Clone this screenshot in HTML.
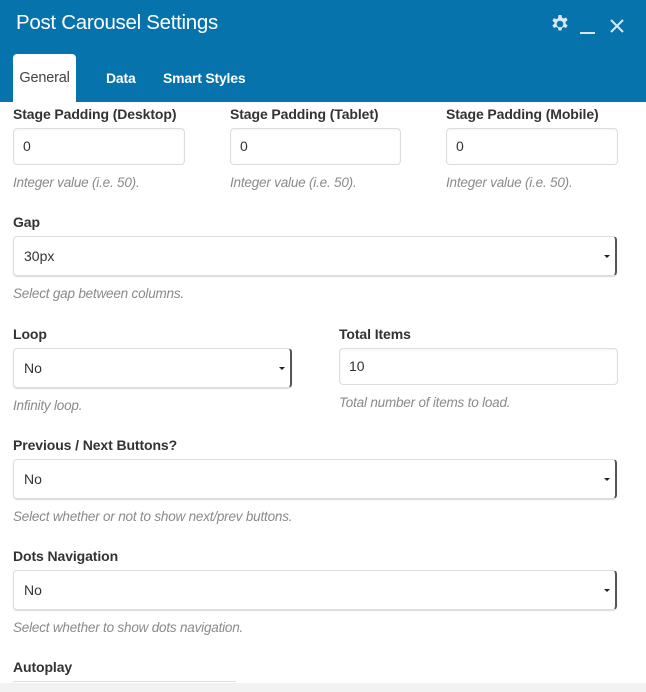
<!DOCTYPE html>
<html><head><style>
*{box-sizing:border-box;margin:0;padding:0}
html,body{width:646px;height:692px;overflow:hidden}
body{background:#fff;font-family:"Liberation Sans",sans-serif;position:relative}
.hdr{position:absolute;left:0;top:0;width:646px;height:102px;background:#0773ad}
.title{position:absolute;left:16px;top:11px;color:#fff;font-size:20.5px;letter-spacing:-0.3px}
.tab{position:absolute;top:54px;height:48px;font-size:14px;line-height:48px;color:#fff;font-weight:bold;letter-spacing:-0.2px}
.tab.act{background:#fff;color:#444;font-weight:normal;border-radius:4px 4px 0 0;left:13px;width:63px;text-align:center;font-size:14.5px}
.a{position:absolute}
.lbl{font-size:14px;font-weight:bold;color:#333;letter-spacing:-0.1px}
.help{font-size:13.5px;font-style:italic;color:#8a8a8a;letter-spacing:-0.2px}
.in{border:1px solid #ddd;border-radius:4px;height:37px;font-size:14px;color:#333;padding-left:9px;line-height:35px;box-shadow:inset 0 1px 2px rgba(0,0,0,.05)}
.sel{border:1px solid #ddd;border-right:2px solid #555;border-radius:4px;height:40px;font-size:14px;color:#333;padding-left:10px;line-height:38px;box-shadow:0 1px 1px rgba(0,0,0,.15)}
.sel:after{content:"";position:absolute;right:5px;top:18px;border:3px solid transparent;border-top:3px solid #222;border-bottom:0}
.foot{position:absolute;left:0;top:683px;width:646px;height:9px;background:#f2f2f2}
</style></head><body>
<div class="hdr">
<div class="title">Post Carousel Settings</div>
<svg class="a" style="left:550px;top:14px" width="20" height="20" viewBox="0 0 20 20"><path fill="#d7e9f5" d="M8.5 1h3l.5 2.6 1.6.9 2.5-1 1.5 2.6-2 1.7v1.9l2 1.7-1.5 2.6-2.5-1-1.6.9-.5 2.6h-3l-.5-2.6-1.6-.9-2.5 1-1.5-2.6 2-1.7V8.4l-2-1.7 1.5-2.6 2.5 1 1.6-.9z"/><circle cx="10" cy="10" r="3.3" fill="#0773ad"/></svg>
<div class="a" style="left:580px;top:32px;width:15px;height:2px;background:#d7e9f5"></div>
<svg class="a" style="left:609px;top:18px" width="16" height="16" viewBox="0 0 16 16"><path d="M2 2L14 14M14 2L2 14" stroke="#d7e9f5" stroke-width="2"/></svg>
<div class="tab act">General</div>
<div class="tab" style="left:106px">Data</div>
<div class="tab" style="left:163px">Smart Styles</div>
</div>

<div class="a lbl" style="left:13px;top:106px">Stage Padding (Desktop)</div>
<div class="a lbl" style="left:230px;top:106px">Stage Padding (Tablet)</div>
<div class="a lbl" style="left:446px;top:106px">Stage Padding (Mobile)</div>
<div class="a in" style="left:13px;top:128px;width:172px">0</div>
<div class="a in" style="left:230px;top:128px;width:171px">0</div>
<div class="a in" style="left:446px;top:128px;width:172px">0</div>
<div class="a help" style="left:13px;top:175px">Integer value (i.e. 50).</div>
<div class="a help" style="left:230px;top:175px">Integer value (i.e. 50).</div>
<div class="a help" style="left:446px;top:175px">Integer value (i.e. 50).</div>

<div class="a lbl" style="left:13px;top:214px">Gap</div>
<div class="a sel" style="left:13px;top:236px;width:604px">30px</div>
<div class="a help" style="left:13px;top:286px">Select gap between columns.</div>

<div class="a lbl" style="left:13px;top:326px">Loop</div>
<div class="a sel" style="left:13px;top:348px;width:279px">No</div>
<div class="a help" style="left:13px;top:398px">Infinity loop.</div>
<div class="a lbl" style="left:339px;top:326px">Total Items</div>
<div class="a in" style="left:339px;top:348px;width:279px">10</div>
<div class="a help" style="left:339px;top:395px">Total number of items to load.</div>

<div class="a lbl" style="left:13px;top:437px">Previous / Next Buttons?</div>
<div class="a sel" style="left:13px;top:459px;width:604px">No</div>
<div class="a help" style="left:13px;top:509px">Select whether or not to show next/prev buttons.</div>

<div class="a lbl" style="left:13px;top:548px">Dots Navigation</div>
<div class="a sel" style="left:13px;top:570px;width:604px">No</div>
<div class="a help" style="left:13px;top:620px">Select whether to show dots navigation.</div>

<div class="a lbl" style="left:13px;top:659px">Autoplay</div>
<div class="a" style="left:13px;top:681px;width:223px;height:2px;border-top:1px solid #ddd;border-radius:4px 4px 0 0"></div>
<div class="foot"></div>
</body></html>
